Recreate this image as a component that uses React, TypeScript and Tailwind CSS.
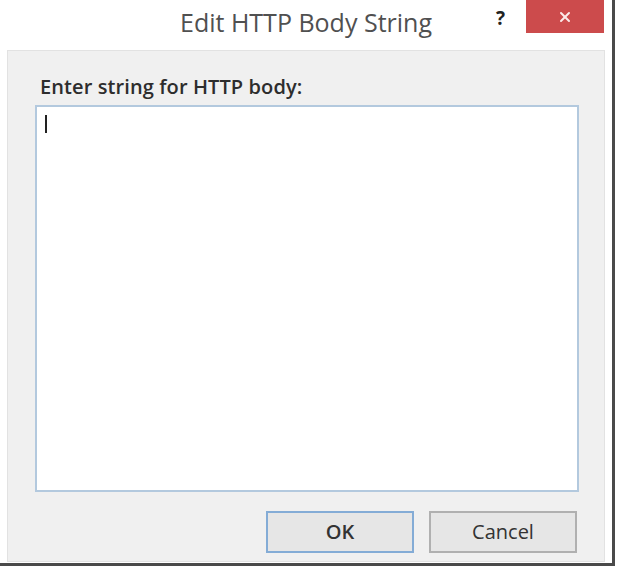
import { X } from "lucide-react";

export default function App() {
  return (
    <div className="h-[568px] w-[617px] bg-white font-['Open_Sans',sans-serif]">
      <div className="flex h-[566px] w-[615px] flex-col border-b-[3px] border-r-[3px] border-[#4a4a4a] bg-white">
        {/* title bar */}
        <div className="relative flex h-[50px] shrink-0">
          <div className="flex flex-1 items-center justify-center pb-[4px] text-[25px] text-[#505050]">
            Edit HTTP Body String
          </div>
          <div className="absolute left-[496px] top-[4px] text-[19px] font-bold text-[#222]">?</div>
          <div className="absolute left-[526px] top-0 flex h-[33px] w-[78px] items-center justify-center bg-[#cc4b4c]">
            <X className="h-[16px] w-[16px] text-[#fbe9e9]" strokeWidth={3} />
          </div>
        </div>

        {/* panel */}
        <div className="mx-[7px] mb-[1px] flex flex-1 flex-col border border-[#e2e2e2] bg-[#f0f0f0] pl-[27px] pr-[25px]">
          <label className="mt-[23px] pl-[5px] text-[20px] font-semibold leading-[26px] tracking-[0.1px] text-[#2d2d2d]">
            Enter string for HTTP body:
          </label>
          <div className="mt-[5px] h-[387px] border-2 border-[#b3c9de] bg-white pl-[8px] pt-[8px]">
            <div className="h-[18px] w-[2px] bg-[#222]" />
          </div>
          <div className="mt-[19px] flex justify-end gap-[15px] pr-[2px]">
            <button className="h-[42px] w-[148px] border-2 border-[#84acd6] bg-[#e6e6e6] text-[20px] font-semibold text-[#333]">
              OK
            </button>
            <button className="h-[42px] w-[148px] border-2 border-[#b0b0b0] bg-[#e6e6e6] text-[20px] text-[#333]">
              Cancel
            </button>
          </div>
        </div>
      </div>
    </div>
  );
}
